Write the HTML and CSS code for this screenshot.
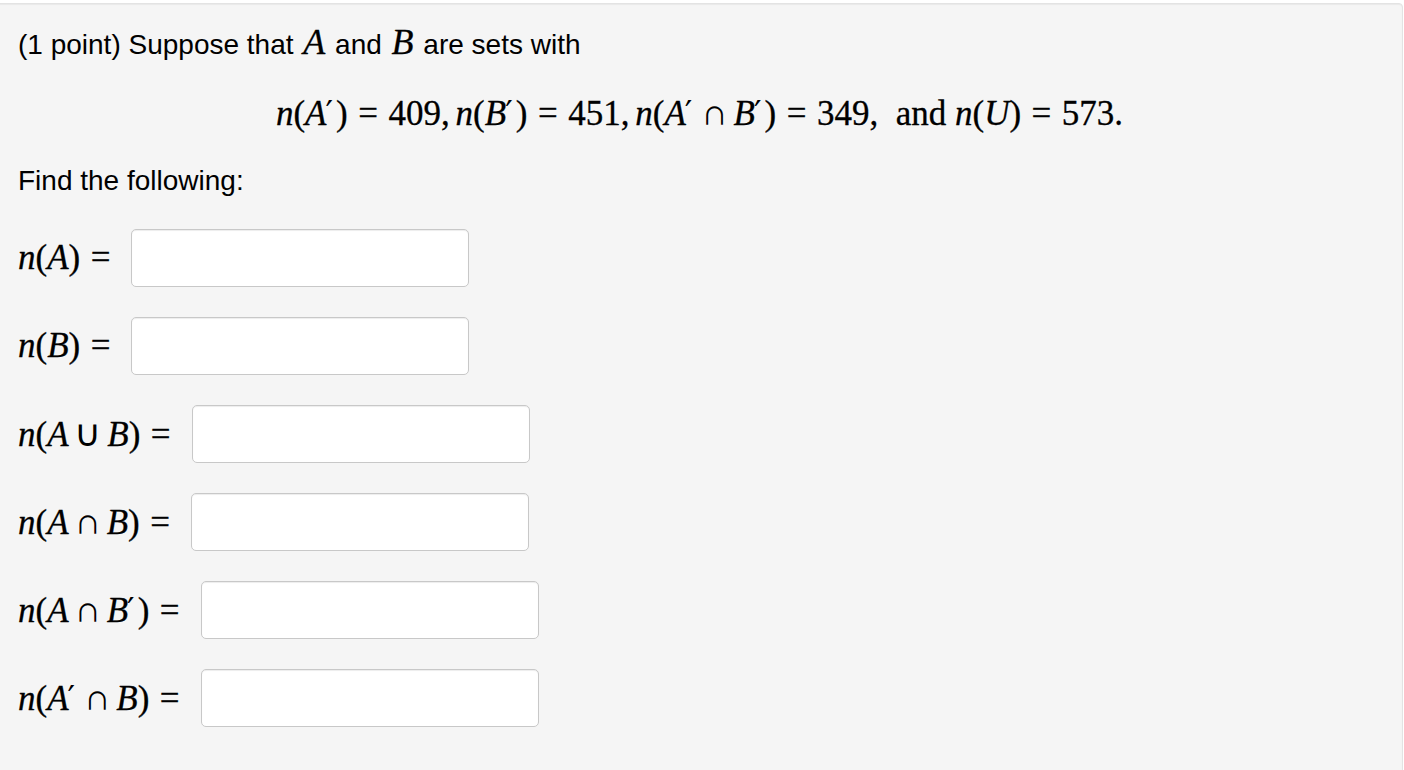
FILE: index.html
```html
<!DOCTYPE html>
<html>
<head>
<meta charset="utf-8">
<link rel="stylesheet" href="styles.css">
</head>
<body>
<div class="well">
  <p class="intro">(1 point) Suppose that <span class="m"><i>A</i></span> and <span class="m"><i>B</i></span> are sets with</p>
  <div class="display"><span class="m"><i>n</i>(<i>A</i><span class="pr">′</span>)<span class="rel">=</span>409,<span class="thin"></span><i>n</i>(<i>B</i><span class="pr">′</span>)<span class="rel">=</span>451,<span class="thin"></span><i>n</i>(<i>A</i><span class="pr">′</span><span class="bin">∩</span><i>B</i><span class="pr">′</span>)<span class="rel">=</span>349,<span class="quad"></span>and<span class="sp"></span><i>n</i>(<i>U</i>)<span class="rel">=</span>573.</span></div>
  <p class="find">Find the following:</p>
  <div class="rows">
    <div class="row"><span class="m label"><i>n</i>(<i>A</i>)<span class="rel">=</span></span><input class="ans" type="text"></div>
    <div class="row"><span class="m label"><i>n</i>(<i>B</i>)<span class="rel">=</span></span><input class="ans" type="text"></div>
    <div class="row"><span class="m label"><i>n</i>(<i>A</i><span class="bin">∪</span><i>B</i>)<span class="rel">=</span></span><input class="ans" type="text"></div>
    <div class="row"><span class="m label"><i>n</i>(<i>A</i><span class="bin">∩</span><i>B</i>)<span class="rel">=</span></span><input class="ans" type="text"></div>
    <div class="row"><span class="m label"><i>n</i>(<i>A</i><span class="bin">∩</span><i>B</i><span class="pr">′</span>)<span class="rel">=</span></span><input class="ans" type="text"></div>
    <div class="row"><span class="m label"><i>n</i>(<i>A</i><span class="pr">′</span><span class="bin">∩</span><i>B</i>)<span class="rel">=</span></span><input class="ans" type="text"></div>
  </div>
</div>
</body>
</html>
```

FILE: styles.css
```css
html, body {
  margin: 0;
  padding: 0;
  background: #ffffff;
  overflow: hidden;
}
body {
  font-family: "Liberation Sans", Arial, sans-serif;
  color: #000;
}
.well {
  margin: 3px 1px 0 -4px;
  height: 800px;
  box-sizing: border-box;
  padding: 18px 0 0 21px;
  background: #f5f5f5;
  border: 1px solid #e3e3e3;
  border-radius: 4px;
  box-shadow: inset 0 1px 1px rgba(0, 0, 0, 0.05);
}
.intro, .find {
  margin: 0;
  font-size: 28px;
  line-height: 40px;
}
.find {
  margin-top: 17px;
}
.m {
  font-family: "Liberation Serif", "Times New Roman", serif;
  font-size: 35px;
  white-space: nowrap;
  -webkit-text-stroke: 0.3px #000;
}
.intro .m {
  font-size: 36px;
  margin: 0 2px;
}
.m i {
  font-style: italic;
}
.pr {
  font-family: "DejaVu Sans", sans-serif;
  font-size: 0.95em;
  line-height: 0;
  margin-left: -1px;
  margin-right: 3px;
  -webkit-text-stroke: 0;
}
.rel {
  margin: 0 0.3em;
}
.bin {
  font-family: "DejaVu Sans", sans-serif;
  font-size: 1.05em;
  font-weight: 300;
  margin: 0 0.16em;
  -webkit-text-stroke: 0;
}
.thin {
  display: inline-block;
  width: 0.17em;
}
.quad {
  display: inline-block;
  width: 0.5em;
}
.sp {
  display: inline-block;
  width: 0.25em;
}
.display {
  margin-top: 24px;
  margin-left: -21px;
  text-align: center;
  line-height: 48px;
}
.rows {
  margin-top: 28px;
  display: flex;
  flex-direction: column;
  gap: 30px;
}
.row {
  display: flex;
  align-items: center;
  gap: 21px;
}
.label {
  line-height: 48px;
}
.label .rel {
  margin-right: 0;
}
.ans {
  width: 338px;
  height: 58px;
  box-sizing: border-box;
  margin: 0;
  border: 1px solid #c8c8c8;
  border-radius: 5px;
  background: #ffffff;
  box-shadow: inset 0 1px 1px rgba(0, 0, 0, 0.075);
  padding: 4px 8px;
  font-size: 20px;
}
```
